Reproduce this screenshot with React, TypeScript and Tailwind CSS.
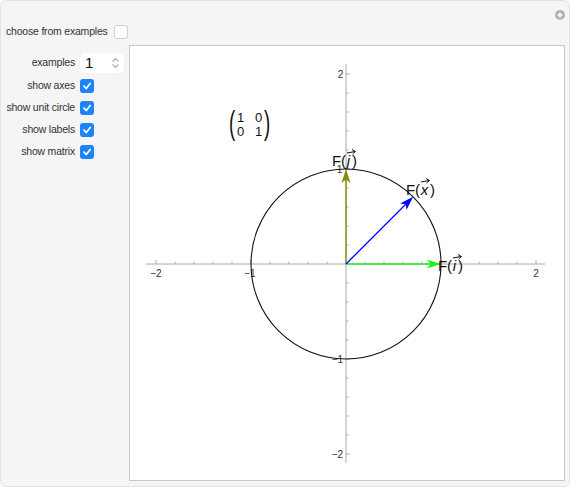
import type { ReactNode } from "react";

const OX = 346;
const OY = 264;
const S = 95;

const px = (u: number) => OX + u * S;
const py = (u: number) => OY - u * S;

function Arrow({ x, y, color }: { x: number; y: number; color: string }) {
  const dx = x - OX;
  const dy = y - OY;
  const len = Math.hypot(dx, dy);
  const ux = dx / len;
  const uy = dy / len;
  const nx = -uy;
  const ny = ux;
  const L = 14;
  const W = 4.5;
  const bx = x - ux * L;
  const by = y - uy * L;
  const mx = x - ux * L * 0.75;
  const my = y - uy * L * 0.75;
  const pts = [
    [x, y],
    [bx + nx * W, by + ny * W],
    [mx, my],
    [bx - nx * W, by - ny * W],
  ]
    .map((p) => p.join(","))
    .join(" ");
  return (
    <g>
      <line x1={OX} y1={OY} x2={mx} y2={my} stroke={color} strokeWidth={1.3} />
      <polygon points={pts} fill={color} />
    </g>
  );
}

function VecLabel({ x, y, letter }: { x: number; y: number; letter: string }) {
  // F( letter ) with a small arrow drawn above the letter
  return (
    <g>
      <text x={x} y={y} fontSize={15} fill="#111" fontFamily='"Liberation Sans", Arial, sans-serif'>
        F(
        <tspan fontStyle="italic" dx={1}>
          {letter}
        </tspan>
        <tspan dx={2}>)</tspan>
      </text>
      <line x1={x + 15} y1={y - 13} x2={x + 23} y2={y - 14.5} stroke="#111" strokeWidth={1} />
      <polyline
        points={`${x + 20},${y - 16.5} ${x + 23.5},${y - 14.5} ${x + 20.5},${y - 12}`}
        fill="none"
        stroke="#111"
        strokeWidth={1}
      />
    </g>
  );
}

function Plot() {
  const ticks: ReactNode[] = [];
  for (let i = -10; i <= 10; i++) {
    if (i === 0) continue;
    const major = i % 5 === 0;
    const len = major ? 4 : 2.5;
    const u = i * 0.2;
    ticks.push(<line key={`x${i}`} x1={px(u)} y1={OY} x2={px(u)} y2={OY - len} stroke="#aaa" strokeWidth={1} />);
    ticks.push(<line key={`y${i}`} x1={OX} y1={py(u)} x2={OX + len} y2={py(u)} stroke="#aaa" strokeWidth={1} />);
  }
  const lab = { fontSize: 10, fill: "#333", fontFamily: '"Liberation Sans", Arial, sans-serif' };

  return (
    <svg width={434} height={434} viewBox="130 46 434 434" className="block">
      <line x1={146} y1={OY} x2={545} y2={OY} stroke="#aaa" strokeWidth={1} />
      <line x1={OX} y1={64} x2={OX} y2={463} stroke="#aaa" strokeWidth={1} />
      {ticks}
      <text x={px(-2)} y={277} textAnchor="middle" {...lab}>−2</text>
      <text x={px(-1) - 1} y={277} textAnchor="middle" {...lab}>−1</text>
      <text x={px(2)} y={277} textAnchor="middle" {...lab}>2</text>
      <text x={OX - 3} y={py(2) + 4} textAnchor="end" {...lab}>2</text>
      <text x={OX - 4} y={py(1) + 4} textAnchor="end" {...lab}>1</text>
      <text x={OX - 3} y={py(-1) + 4} textAnchor="end" {...lab}>−1</text>
      <text x={OX - 3} y={py(-2) + 4} textAnchor="end" {...lab}>−2</text>

      <circle cx={OX} cy={OY} r={S} fill="none" stroke="#111" strokeWidth={1.1} />

      <Arrow x={px(1)} y={OY} color="#1ff01f" />
      <Arrow x={OX} y={py(1)} color="#8a8a00" />
      <Arrow x={px(Math.SQRT1_2)} y={py(Math.SQRT1_2)} color="#0000ff" />

      <VecLabel x={332} y={166} letter="j" />
      <VecLabel x={406} y={195} letter="x" />
      <VecLabel x={438} y={271} letter="i" />

      {/* matrix */}
      <g fontFamily='"Liberation Sans", Arial, sans-serif' fill="#111">
        <text x={0} y={0} fontSize={34} transform="translate(229 134) scale(0.55 1)">(</text>
        <text x={0} y={0} fontSize={34} transform="translate(264 134) scale(0.55 1)">)</text>
        <text x={237} y={122} fontSize={13}>1</text>
        <text x={255} y={122} fontSize={13}>0</text>
        <text x={237} y={136} fontSize={13}>0</text>
        <text x={255} y={136} fontSize={13}>1</text>
      </g>
    </svg>
  );
}

function Check() {
  return (
    <span className="flex h-[14px] w-[14px] items-center justify-center rounded-[3px] bg-[#1b84fa]">
      <svg width="10" height="10" viewBox="0 0 10 10">
        <polyline points="2,5.2 4.2,7.5 8.2,2.5" fill="none" stroke="white" strokeWidth="1.8" strokeLinecap="round" strokeLinejoin="round" />
      </svg>
    </span>
  );
}

export default function App() {
  const rows = ["show axes", "show unit circle", "show labels", "show matrix"];
  return (
    <div className="h-[488px] w-[571px] bg-white font-['Liberation_Sans',Arial,sans-serif] text-[10.5px] tracking-[-0.2px] text-[#333]">
      <div className="relative h-[487px] w-[570px] rounded-[6px] border border-[#e4e4e4] bg-[#f5f5f5]">
        <span className="absolute right-[4px] top-[9px] flex h-[10px] w-[10px] items-center justify-center rounded-full bg-[#b3b3b3]">
          <svg width="6" height="6" viewBox="0 0 6 6">
            <path d="M3 0.5V5.5M0.5 3H5.5" stroke="white" strokeWidth="1.4" />
          </svg>
        </span>

        <div className="mt-[24px] flex h-[14px] items-center gap-[6px] pl-[5px]">
          <span>choose from examples</span>
          <span className="h-[14px] w-[14px] rounded-[3px] border border-[#cfcfcf] bg-white" />
        </div>

        <div className="mt-[6px] flex">
          <div className="grid w-[128px] grid-cols-[74px_auto] content-start gap-x-[5px] pt-[8px]">
            <span className="flex h-[20px] items-center justify-end">examples</span>
            <span className="flex h-[20px] w-[44px] items-center justify-between rounded-[5px] bg-white pl-[5px] pr-[4px] text-[15px] text-[#111] shadow-[0_0_1px_rgba(0,0,0,0.08)]">
              1
              <svg width="9" height="12" viewBox="0 0 9 12">
                <polyline points="1.5,4.5 4.5,1.5 7.5,4.5" fill="none" stroke="#aaa" strokeWidth="1.1" />
                <polyline points="1.5,7.5 4.5,10.5 7.5,7.5" fill="none" stroke="#aaa" strokeWidth="1.1" />
              </svg>
            </span>
            <span className="col-span-2 h-[2px]" />
            {rows.map((r) => (
              <div key={r} className="col-span-2 grid grid-cols-[74px_auto] gap-x-[5px]">
                <span className="flex h-[22px] items-center justify-end whitespace-nowrap">{r}</span>
                <span className="flex h-[22px] items-center">
                  <Check />
                </span>
              </div>
            ))}
          </div>
          <div className="h-[436px] w-[436px] border border-[#c9c9c9] bg-white">
            <Plot />
          </div>
        </div>
      </div>
    </div>
  );
}
